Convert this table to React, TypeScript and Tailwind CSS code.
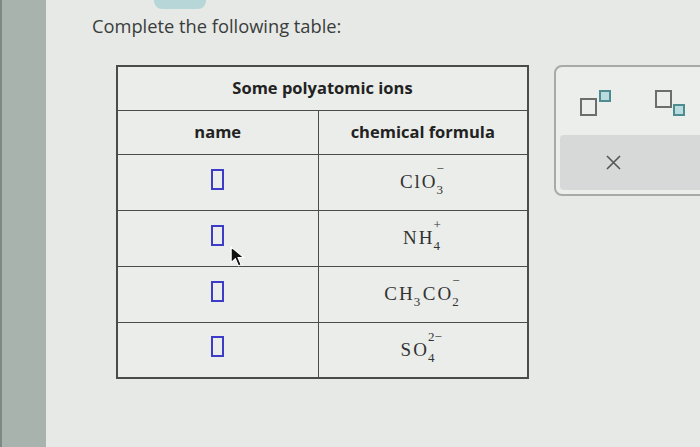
const Ion = ({ parts, sub, sup, w = "w-[9px]" }: { parts: string[]; sub: string; sup: string; w?: string }) => (
  <span className="inline-flex items-baseline tracking-[2px]">
    {parts.map((p, i) => (
      <span key={i}>{p}</span>
    ))}
    <span className={`relative inline-block h-[1px] -ml-[1px] text-[13px] leading-[13px] tracking-normal text-left ${w}`}>
      <span className="absolute left-0 -top-[25px]">{sup}</span>
      <span className="absolute left-0 -top-[4px]">{sub}</span>
    </span>
  </span>
);

const Box = () => <span className="inline-block w-[13px] h-[21px] border-2 border-[#3c3cc8] bg-transparent" />;

const rows = [
  { f: <Ion parts={["ClO"]} sub="3" sup="−" /> },
  { f: <Ion parts={["N", "H"]} sub="4" sup="+" /> },
  {
    f: (
      <span className="inline-flex items-baseline tracking-[2px]">
        CH
        <span className="relative inline-block h-[1px] w-[8px] -ml-[1px] mr-[1px] text-[13px] leading-[13px] tracking-normal text-left">
          <span className="absolute left-0 -top-[4px]">3</span>
        </span>
        <Ion parts={["CO"]} sub="2" sup="−" />
      </span>
    ),
  },
  { f: <Ion parts={["S", "O"]} sub="4" sup="2−" w="w-[17px]" /> },
];

const App = () => {
  return (
    <div className="relative flex w-[700px] h-[447px] overflow-hidden bg-[#e6e9e5] font-['Open_Sans',sans-serif]">
      {/* left edge of the screen */}
      <div className="shrink-0 w-[46px] h-full bg-[#a8b3ae] border-l-2 border-[#7f8884]" />

      <div className="flex-1 min-w-0 pl-[46px]">
        <div className="ml-[62px] w-[52px] h-[9px] rounded-b-lg bg-[#b7d6d8]" />
        <h1 className="mt-[5px] text-[18.3px] leading-[24px] text-[#3a3c3c]">Complete the following table:</h1>

        <div className="flex items-start mt-[27px] ml-[24px]">
          <table className="shrink-0 w-[413px] border-collapse border-2 border-[#4a4c4c] bg-[#eaede9] text-[#222]">
            <thead>
              <tr className="h-[44px]">
                <th colSpan={2} className="border border-[#4a4c4c] text-[16.5px] font-bold">
                  Some polyatomic ions
                </th>
              </tr>
              <tr className="h-[44px]">
                <th className="w-[201px] border border-[#4a4c4c] text-[16.5px] font-bold">name</th>
                <th className="border border-[#4a4c4c] text-[16.5px] font-bold">chemical formula</th>
              </tr>
            </thead>
            <tbody>
              {rows.map((r, i) => (
                <tr key={i} className="h-[56px]">
                  <td className="border border-[#4a4c4c] text-center align-middle">
                    <Box />
                  </td>
                  <td className="border border-[#4a4c4c] text-center align-middle font-['Liberation_Serif',serif] text-[19px] text-[#333]">
                    {r.f}
                  </td>
                </tr>
              ))}
            </tbody>
          </table>

          <div className="shrink-0 ml-[25px] w-[170px] h-[131px] rounded-lg border-2 border-[#a6aaa8] bg-[#eceeec] p-[4px]">
            <div className="flex items-center h-[64px]">
              <button className="relative w-[32px] h-[26px] ml-[20px]">
                <span className="absolute left-0 bottom-0 w-[17px] h-[18px] border-2 border-[#6b6e6d]" />
                <span className="absolute left-[19px] top-0 w-[12px] h-[12px] border-2 border-[#4f8c90] bg-[#b8dcdf]" />
              </button>
              <button className="relative w-[32px] h-[26px] ml-[43px]">
                <span className="absolute left-0 top-0 w-[17px] h-[18px] border-2 border-[#6b6e6d]" />
                <span className="absolute left-[18px] bottom-0 w-[12px] h-[12px] border-2 border-[#4f8c90] bg-[#b8dcdf]" />
              </button>
            </div>
            <div className="flex items-center h-[55px] rounded-sm bg-[#d6d9d7] pl-[46px]">
              <svg width="15" height="15" viewBox="0 0 15 15" className="stroke-[#555]">
                <path d="M1 1 L14 14 M14 1 L1 14" strokeWidth="1.6" fill="none" />
              </svg>
            </div>
          </div>
        </div>
      </div>

      {/* mouse pointer */}
      <svg width="17" height="23" viewBox="0 0 16 22" className="absolute left-[230px] top-[246px]">
        <path d="M1 1 L1 16 L5 12 L8 19 L10.5 18 L7.5 11 L13 11 Z" fill="#111" stroke="#fff" strokeWidth="1" />
      </svg>
    </div>
  );
};

export default App;
